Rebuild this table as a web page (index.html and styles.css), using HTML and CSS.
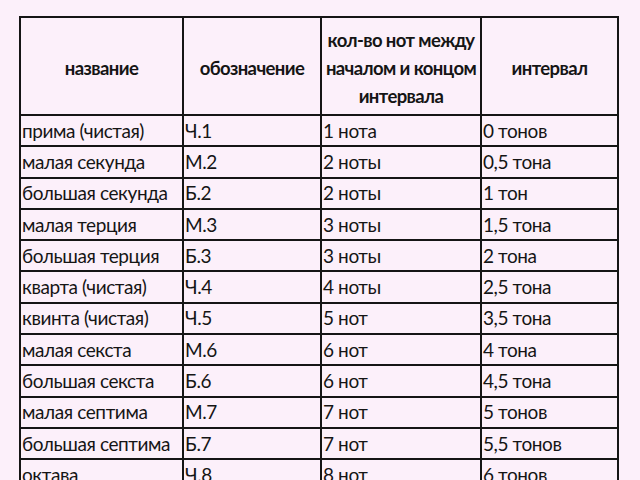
FILE: index.html
```html
<!DOCTYPE html>
<html lang="ru">
<head>
<meta charset="utf-8">
<title>Интервалы</title>
<link rel="stylesheet" href="styles.css">
</head>
<body>
<table class="intervals">
  <colgroup>
    <col class="c1"><col class="c2"><col class="c3"><col class="c4">
  </colgroup>
  <thead>
    <tr>
      <th>название</th>
      <th>обозначение</th>
      <th>кол-во нот между началом&nbsp;и&nbsp;концом интервала</th>
      <th>интервал</th>
    </tr>
  </thead>
  <tbody>
    <tr><td>прима (чистая)</td><td>Ч.1</td><td>1 нота</td><td>0 тонов</td></tr>
    <tr><td>малая секунда</td><td>М.2</td><td>2 ноты</td><td>0,5 тона</td></tr>
    <tr><td>большая секунда</td><td>Б.2</td><td>2 ноты</td><td>1 тон</td></tr>
    <tr><td>малая терция</td><td>М.3</td><td>3 ноты</td><td>1,5 тона</td></tr>
    <tr><td>большая терция</td><td>Б.3</td><td>3 ноты</td><td>2 тона</td></tr>
    <tr><td>кварта (чистая)</td><td>Ч.4</td><td>4 ноты</td><td>2,5 тона</td></tr>
    <tr><td>квинта (чистая)</td><td>Ч.5</td><td>5 нот</td><td>3,5 тона</td></tr>
    <tr><td>малая секста</td><td>М.6</td><td>6 нот</td><td>4 тона</td></tr>
    <tr><td>большая секста</td><td>Б.6</td><td>6 нот</td><td>4,5 тона</td></tr>
    <tr><td>малая септима</td><td>М.7</td><td>7 нот</td><td>5 тонов</td></tr>
    <tr><td>большая септима</td><td>Б.7</td><td>7 нот</td><td>5,5 тонов</td></tr>
    <tr><td>октава</td><td>Ч.8</td><td>8 нот</td><td>6 тонов</td></tr>
  </tbody>
</table>
</body>
</html>
```
FILE: styles.css
```css
html, body {
  margin: 0;
  padding: 0;
  background: #fcf0fa;
  overflow: hidden;
}
body {
  padding: 16px 0 0 19px;
  font-family: Lato, "Open Sans", sans-serif;
  color: #151515;
}
.intervals {
  border-collapse: collapse;
  table-layout: fixed;
  width: 598px;
}
.c1 { width: 163px; }
.c2 { width: 138px; }
.c3 { width: 160px; }
.c4 { width: 137px; }
.intervals th,
.intervals td {
  border: 2px solid #151515;
  font-size: 19px;
  letter-spacing: -0.4px;
  line-height: 22px;
}
.intervals th {
  height: 93px;
  font-size: 18.5px;
  font-weight: bold;
  text-align: center;
  line-height: 28px;
  padding: 3px 0 0;
  letter-spacing: -0.6px;
  white-space: normal;
}
.intervals td {
  height: 29.3px;
  padding: 0 0 0 1px;
  text-align: left;
  vertical-align: middle;
}
```
